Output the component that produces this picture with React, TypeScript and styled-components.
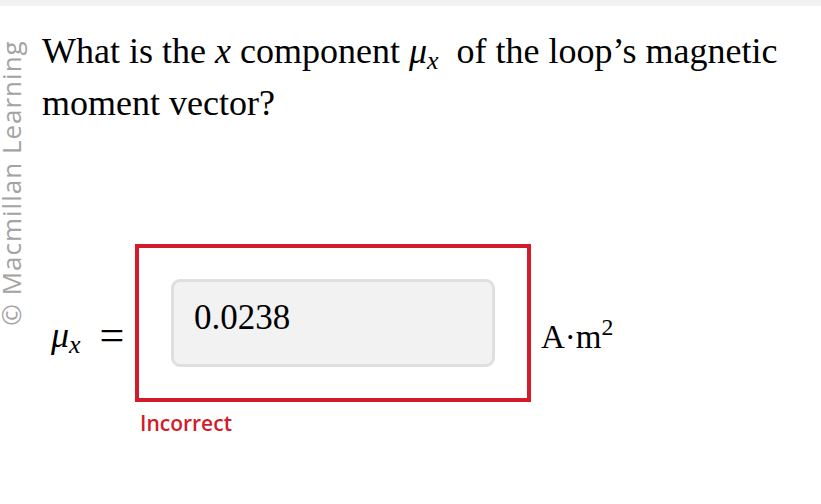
import React from "react";
import styled, { createGlobalStyle } from "styled-components";

const Global = createGlobalStyle`
  html, body { margin: 0; padding: 0; background: #fff; }
  body { width: 821px; height: 504px; overflow: hidden; }
`;

const Page = styled.div`
  position: relative;
  width: 821px;
  height: 504px;
  display: flex;
  flex-direction: column;
  background: #fff;
`;

const TopBar = styled.div`
  height: 6px;
  background: #f2f2f2;
  flex: none;
`;

const Body = styled.div`
  flex: 1;
  padding: 19px 0 0 42px;
`;

const Watermark = styled.div`
  position: absolute;
  left: 0;
  top: 328px;
  width: 290px;
  height: 26px;
  transform-origin: 0 0;
  transform: rotate(-90deg);
  text-align: center;
  white-space: nowrap;
  font-family: "Open Sans", sans-serif;
  font-size: 26px;
  line-height: 22px;
  letter-spacing: 1px;
  color: #a3a3a3;
`;

const Question = styled.p`
  margin: 0;
  font-family: "Liberation Serif", serif;
  font-size: 36px;
  line-height: 52px;
  color: #000;
`;

const Var = styled.i`
  font-family: "Liberation Serif", serif;
  font-style: italic;
`;

const Sub = styled.sub`
  font-size: 0.72em;
  vertical-align: -0.25em;
  line-height: 0;
`;

const AnswerRow = styled.div`
  display: flex;
  align-items: flex-start;
  margin-top: 115px;
  margin-left: 9px;
`;

const Label = styled.div`
  font-family: "Liberation Serif", serif;
  font-size: 36px;
  line-height: 36px;
  width: 84px;
  flex: none;
  padding-top: 73px;
  white-space: nowrap;
`;

const Eq = styled.span`
  font-size: 44px;
  line-height: 0;
  vertical-align: -3px;
  margin-left: 19px;
`;

const AnswerBox = styled.div`
  box-sizing: border-box;
  width: 396px;
  height: 158px;
  flex: none;
  border: 4px solid #d31b2a;
  padding: 31px 0 0 32px;
`;

const Field = styled.div`
  width: 324px;
  height: 88px;
  box-sizing: border-box;
  background: #f2f2f2;
  border: 3px solid #dfdfdf;
  border-radius: 9px;
  padding: 16px 0 0 20px;
  font-family: "Liberation Serif", serif;
  font-size: 35px;
  color: #000;
`;

const Unit = styled.div`
  font-family: "Liberation Serif", serif;
  font-size: 33px;
  line-height: 33px;
  margin-left: 10px;
  padding-top: 77px;
`;

const Sup = styled.sup`
  font-size: 0.72em;
  vertical-align: 0.55em;
  line-height: 0;
`;

const Feedback = styled.div`
  margin: 7px 0 0 98px;
  font-family: "Open Sans", sans-serif;
  font-weight: 600;
  font-size: 21px;
  color: #d31b2a;
`;

export default function App() {
  return (
    <Page>
      <Global />
      <TopBar />
      <Watermark>© Macmillan Learning</Watermark>
      <Body>
        <Question>
          What is the <Var>x</Var> component <Var>μ</Var>
          <Sub>
            <Var>x</Var>
          </Sub>{" "}
          &nbsp;of the loop’s magnetic
          <br />
          moment vector?
        </Question>
        <AnswerRow>
          <Label>
            <Var>μ</Var>
            <Sub>
              <Var>x</Var>
            </Sub>
            <Eq>=</Eq>
          </Label>
          <AnswerBox>
            <Field>0.0238</Field>
          </AnswerBox>
          <Unit>
            A·m<Sup>2</Sup>
          </Unit>
        </AnswerRow>
        <Feedback>Incorrect</Feedback>
      </Body>
    </Page>
  );
}
